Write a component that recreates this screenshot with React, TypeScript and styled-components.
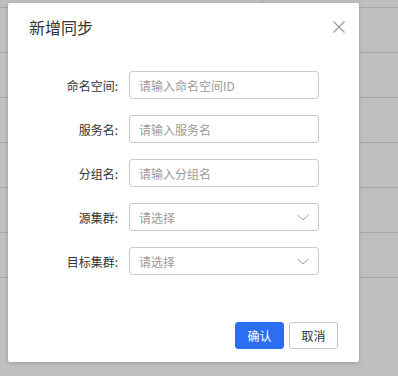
import React from 'react';
import styled, { createGlobalStyle } from 'styled-components';

const GlobalStyle = createGlobalStyle`
  html, body {
    margin: 0;
    padding: 0;
    background: #bfbfbf;
    font-family: "Noto Sans CJK SC", "Noto Sans", "Liberation Sans", sans-serif;
  }
`;

const Page = styled.div`
  position: relative;
  width: 398px;
  height: 376px;
  overflow: hidden;
  background: #bfbfbf;
`;

const TableHead = styled.div`
  position: relative;
  height: 7px;
  border-bottom: 1px solid #a7a8ae;

  &::after {
    content: '';
    position: absolute;
    left: 262px;
    top: 0;
    width: 1px;
    height: 7px;
    background: #a7a8ae;
  }
`;

const TableRow = styled.div`
  height: 44px;
  border-bottom: 1px solid #a7a8ae;
`;

const Modal = styled.div`
  position: absolute;
  left: 8px;
  top: 3px;
  width: 351px;
  height: 359px;
  display: flex;
  flex-direction: column;
  box-sizing: border-box;
  background: #fff;
  border-radius: 2px;
  box-shadow: 0 1px 4px rgba(0, 0, 0, 0.18);
`;

const Header = styled.div`
  display: flex;
  align-items: center;
  justify-content: space-between;
  height: 48px;
  padding: 0 13px 0 21px;
`;

const Title = styled.div`
  font-size: 16px;
  color: #333;
  line-height: 1;
`;

const CloseButton = styled.button`
  display: flex;
  align-items: center;
  justify-content: center;
  width: 14px;
  height: 14px;
  padding: 0;
  border: none;
  background: none;
  cursor: pointer;
`;

const Form = styled.div`
  flex: 1;
  display: grid;
  grid-template-columns: 80px 190px;
  grid-auto-rows: 28px;
  column-gap: 11px;
  row-gap: 16px;
  align-content: start;
  padding: 20px 0 0 30px;
`;

const Label = styled.label`
  display: flex;
  align-items: center;
  justify-content: flex-end;
  font-size: 12px;
  color: #333;
  white-space: nowrap;
`;

const Field = styled.div`
  display: flex;
  align-items: center;
  justify-content: space-between;
  box-sizing: border-box;
  height: 28px;
  padding: 0 9px 0 9px;
  border: 1px solid #c6c8cd;
  border-radius: 3px;
  font-size: 12px;
  color: #9b9b9b;
`;

const Footer = styled.div`
  display: flex;
  justify-content: flex-end;
  gap: 5px;
  padding: 0 21px 13px;
`;

const Button = styled.button<{ $primary?: boolean }>`
  width: 49px;
  height: 27px;
  padding: 0;
  box-sizing: border-box;
  border-radius: 3px;
  font-family: inherit;
  font-size: 12px;
  border: 1px solid ${(p) => (p.$primary ? '#2c6ef2' : '#c3c5cb')};
  background: ${(p) => (p.$primary ? '#2c6ef2' : '#fff')};
  color: ${(p) => (p.$primary ? '#fff' : '#333')};
  cursor: pointer;
`;

const CloseIcon = () => (
  <svg width="12" height="12" viewBox="0 0 12 12">
    <path d="M0.5 0.5 L11.5 11.5 M11.5 0.5 L0.5 11.5" stroke="#9a9a9a" strokeWidth="1.2" fill="none" />
  </svg>
);

const ChevronIcon = () => (
  <svg width="12" height="7" viewBox="0 0 12 7">
    <polyline points="0.5,0.8 6,6 11.5,0.8" stroke="#a0a0a0" strokeWidth="1" fill="none" />
  </svg>
);

const fields = [
  { label: '命名空间:', placeholder: '请输入命名空间ID' },
  { label: '服务名:', placeholder: '请输入服务名' },
  { label: '分组名:', placeholder: '请输入分组名' },
  { label: '源集群:', placeholder: '请选择', select: true },
  { label: '目标集群:', placeholder: '请选择', select: true },
];

export default function App() {
  return (
    <Page>
      <GlobalStyle />
      <TableHead />
      {Array.from({ length: 6 }).map((_, i) => (
        <TableRow key={i} />
      ))}
      <Modal>
        <Header>
          <Title>新增同步</Title>
          <CloseButton>
            <CloseIcon />
          </CloseButton>
        </Header>
        <Form>
          {fields.map((f) => (
            <React.Fragment key={f.label}>
              <Label>{f.label}</Label>
              <Field>
                <span>{f.placeholder}</span>
                {f.select && <ChevronIcon />}
              </Field>
            </React.Fragment>
          ))}
        </Form>
        <Footer>
          <Button $primary>确认</Button>
          <Button>取消</Button>
        </Footer>
      </Modal>
    </Page>
  );
}
